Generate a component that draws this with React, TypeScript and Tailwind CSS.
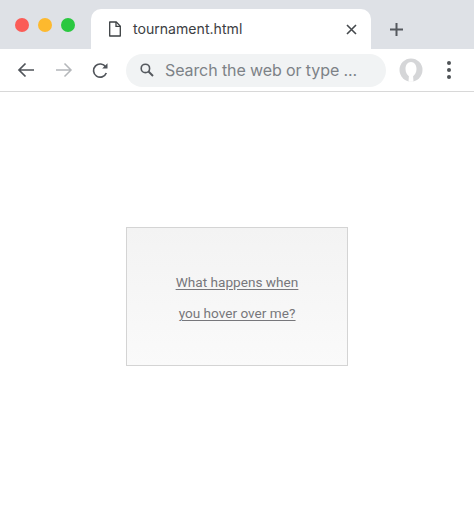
export default function App() {
  return (
    <div className="w-[474px] h-[528px] bg-white overflow-hidden font-['Inter','Roboto',sans-serif]">
      <div className="h-[49px] bg-[#dee1e6] flex items-end">
        <div className="w-[91px] h-[40px] flex items-start gap-[9px] pl-[15px] pt-[9px] shrink-0">
          <span className="w-[14px] h-[14px] rounded-full bg-[#fb5c57]" />
          <span className="w-[14px] h-[14px] rounded-full bg-[#fdb92e]" />
          <span className="w-[14px] h-[14px] rounded-full bg-[#2ac840]" />
        </div>
        <div className="w-[280px] h-[40px] bg-white rounded-t-[10px] flex items-center pl-[17px] pr-[14px] shrink-0">
          <svg width="14" height="16" viewBox="0 0 14 16" fill="none" stroke="#3c4043" strokeWidth="1.3" className="shrink-0">
            <path d="M1.7 1h6.6l4 4.1V15H1.7z" strokeLinejoin="round" />
            <path d="M8 1v4.4h4.3" />
          </svg>
          <span className="ml-[11px] text-[14.1px] leading-[20px] text-[#3c4043] flex-1">tournament.html</span>
          <svg width="11" height="11" viewBox="0 0 11 11" stroke="#45494d" strokeWidth="1.6" className="shrink-0">
            <path d="M1 1l9 9M10 1l-9 9" />
          </svg>
        </div>
        <div className="h-[40px] flex items-center pl-[18px]">
          <svg width="15" height="15" viewBox="0 0 15 15" stroke="#55595e" strokeWidth="2">
            <path d="M7.5 1v13M1 7.5h13" />
          </svg>
        </div>
      </div>
      <div className="h-[42px] bg-white border-b border-[#d8d8d8] flex items-center box-content">
        <div className="w-[126px] flex items-center pl-[17px] shrink-0">
          <svg width="18" height="16" viewBox="0 0 18 16" fill="none" stroke="#50545a" strokeWidth="1.7">
            <path d="M17 8H2M8.5 1.5L2 8l6.5 6.5" />
          </svg>
          <svg width="18" height="16" viewBox="0 0 18 16" fill="none" stroke="#b4b7ba" strokeWidth="1.5" className="ml-[20px]">
            <path d="M1 8h15M9.5 1.5L16 8l-6.5 6.5" />
          </svg>
          <svg width="17" height="17" viewBox="0 0 17 17" fill="none" stroke="#50545a" strokeWidth="1.7" className="ml-[19px]">
            <path d="M14.3 11a6.6 6.6 0 1 1-.6-6" />
            <path d="M15.5 1.2v5.3h-5.3z" fill="#50545a" stroke="none" />
          </svg>
        </div>
        <div className="w-[260px] h-[33px] rounded-full bg-[#f1f3f4] flex items-center pl-[14px] shrink-0">
          <svg width="14" height="14" viewBox="0 0 14 14" fill="none" stroke="#55595e" strokeWidth="1.6">
            <circle cx="5.4" cy="5.4" r="4.2" />
            <path d="M8.5 8.5L13 13" strokeWidth="1.9" />
          </svg>
          <span className="ml-[11px] text-[16px] text-[#7d8287] whitespace-nowrap tracking-[-0.1px]">Search the web or type ...</span>
        </div>
        <svg width="24" height="24" viewBox="0 0 24 24" className="ml-[13px] shrink-0">
          <circle cx="12" cy="12" r="11.5" fill="#d5d6d8" />
          <path d="M12 4c-3.4 0-5.5 3-5.5 7 0 3.6 1.8 6 3.4 7.2l-.4 5.6h5l-.4-5.6c1.6-1.2 3.4-3.6 3.4-7.2 0-4-2.1-7-5.5-7z" fill="#fff" />
        </svg>
        <div className="ml-[24px] flex flex-col gap-[3px]">
          <span className="w-[4px] h-[4px] rounded-full bg-[#4f5357]" />
          <span className="w-[4px] h-[4px] rounded-full bg-[#4f5357]" />
          <span className="w-[4px] h-[4px] rounded-full bg-[#4f5357]" />
        </div>
      </div>
      <div className="flex justify-center pt-[135px]">
        <div className="w-[222px] h-[139px] border border-[#d4d4d4] bg-gradient-to-b from-[#f3f3f3] to-[#fafafa] flex flex-col items-center justify-center gap-[11px] pt-[2px] font-['Roboto',sans-serif] text-[13.6px] leading-[20px] text-[#77777b] underline underline-offset-2">
          <a>What happens when</a>
          <a>you hover over me?</a>
        </div>
      </div>
    </div>
  );
}
